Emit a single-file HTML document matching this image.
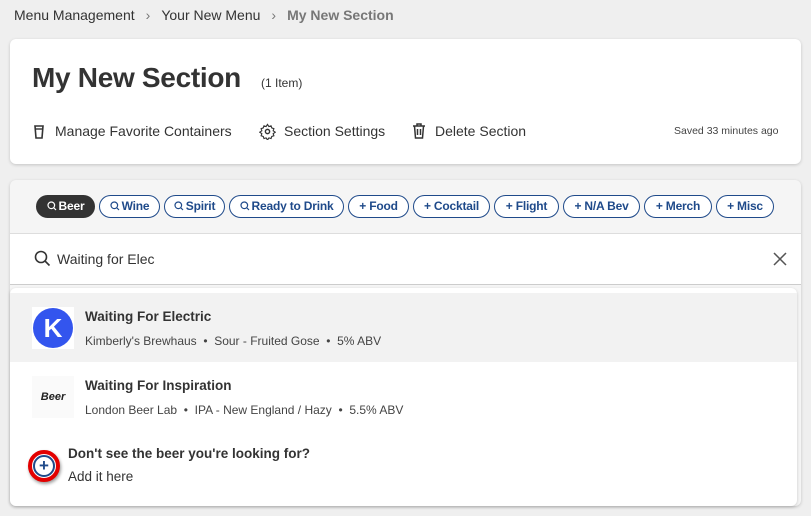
<!DOCTYPE html>
<html><head><style>
*{box-sizing:border-box;margin:0;padding:0}
body{width:811px;height:516px;background:#efefef;font-family:"Liberation Sans",sans-serif;color:#333;position:relative;overflow:hidden}
.abs{position:absolute}
.card{position:absolute;background:#fff;border-radius:6px;box-shadow:0 1px 3px rgba(0,0,0,.18)}
.bc{top:7px;left:14px;font-size:14px;color:#333;white-space:nowrap}
.bc span.sep{color:#777;margin:0 11px}
.pill{position:absolute;top:195px;height:23px;border:1.5px solid #1f4a8a;border-radius:12px;color:#1f4a8a;font-size:12px;font-weight:bold;line-height:20px;text-align:center;white-space:nowrap;background:#fff;letter-spacing:-0.2px}
.pill.on{background:#333;border-color:#333;color:#fff}
.pill svg{vertical-align:-1px;margin-right:2px}
.act{position:absolute;top:123px;font-size:14px;color:#333;white-space:nowrap}
.sub{font-size:12px;color:#444;white-space:nowrap}
</style></head><body>
<div class="abs bc">Menu Management<span class="sep">›</span>Your New Menu<span class="sep">›</span><b style="color:#777">My New Section</b></div>

<div class="card" style="left:10px;top:39px;width:791px;height:125px"></div>
<div class="abs" style="left:32px;top:62px;font-size:28px;font-weight:bold;color:#333;letter-spacing:-0.3px">My New Section</div>
<div class="abs" style="left:261px;top:76px;font-size:12px;color:#333">(1 Item)</div>
<svg class="abs" style="left:33px;top:124px" width="12" height="15" viewBox="0 0 12 15"><path d="M2 2h8l-1 12H3z" fill="none" stroke="#333" stroke-width="1.6"/><path d="M2 5h8" stroke="#333" stroke-width="1.4"/></svg>
<div class="act" style="left:55px">Manage Favorite Containers</div>
<svg class="abs" style="left:259px;top:123px" width="17" height="17" viewBox="0 0 24 24"><circle cx="12" cy="12" r="3" fill="none" stroke="#333" stroke-width="2"/><path d="M12 2l2 3 3-1 1 3 3 1-1 3 3 2-3 2 1 3-3 1-1 3-3-1-2 3-2-3-3 1-1-3-3-1 1-3-3-2 3-2-1-3 3-1 1-3 3 1z" fill="none" stroke="#333" stroke-width="1.6"/></svg>
<div class="act" style="left:284px">Section Settings</div>
<svg class="abs" style="left:412px;top:123px" width="14" height="16" viewBox="0 0 14 16"><path d="M1 3h12M5 3V1h4v2M2.5 3l1 12h7l1-12M5.5 6v6M8.5 6v6" fill="none" stroke="#333" stroke-width="1.5"/></svg>
<div class="act" style="left:435px">Delete Section</div>
<div class="abs" style="left:674px;top:125px;font-size:10.5px;color:#444;top:125px">Saved 33 minutes ago</div>

<div class="card" style="left:10px;top:180px;width:791px;height:326px;background:#f5f5f5"></div>
<div class="pill on" style="left:36px;width:59px"><svg width="10" height="10" viewBox="0 0 10 10"><circle cx="4.3" cy="4.3" r="3.3" fill="none" stroke="#fff" stroke-width="1.2"/><path d="M6.7 6.7L9 9" stroke="#fff" stroke-width="1.2"/></svg>Beer</div>
<div class="pill" style="left:99px;width:61px"><svg width="10" height="10" viewBox="0 0 10 10"><circle cx="4.3" cy="4.3" r="3.3" fill="none" stroke="#1f4a8a" stroke-width="1.2"/><path d="M6.7 6.7L9 9" stroke="#1f4a8a" stroke-width="1.2"/></svg>Wine</div>
<div class="pill" style="left:164px;width:61px"><svg width="10" height="10" viewBox="0 0 10 10"><circle cx="4.3" cy="4.3" r="3.3" fill="none" stroke="#1f4a8a" stroke-width="1.2"/><path d="M6.7 6.7L9 9" stroke="#1f4a8a" stroke-width="1.2"/></svg>Spirit</div>
<div class="pill" style="left:229px;width:115px"><svg width="10" height="10" viewBox="0 0 10 10"><circle cx="4.3" cy="4.3" r="3.3" fill="none" stroke="#1f4a8a" stroke-width="1.2"/><path d="M6.7 6.7L9 9" stroke="#1f4a8a" stroke-width="1.2"/></svg>Ready to Drink</div>
<div class="pill" style="left:348px;width:61px">+ Food</div>
<div class="pill" style="left:413px;width:77px">+ Cocktail</div>
<div class="pill" style="left:494px;width:65px">+ Flight</div>
<div class="pill" style="left:563px;width:77px">+ N/A Bev</div>
<div class="pill" style="left:644px;width:68px">+ Merch</div>
<div class="pill" style="left:716px;width:58px">+ Misc</div>

<div class="abs" style="left:10px;top:233px;width:791px;height:52px;background:#fff;border-top:1px solid #ddd;border-bottom:1px solid #ccc"></div>
<svg class="abs" style="left:34px;top:250px" width="17" height="17" viewBox="0 0 17 17"><circle cx="7" cy="7" r="5.5" fill="none" stroke="#333" stroke-width="1.6"/><path d="M11 11l4.5 4.5" stroke="#333" stroke-width="1.6"/></svg>
<div class="abs" style="left:57px;top:251px;font-size:14px;color:#333">Waiting for Elec</div>
<svg class="abs" style="left:773px;top:252px" width="14" height="14" viewBox="0 0 14 14"><path d="M1 1l12 12M13 1L1 13" stroke="#555" stroke-width="1.5"/></svg>

<div class="card" style="left:10px;top:288px;width:787px;height:218px"></div>
<div class="abs" style="left:10px;top:293px;width:787px;height:69px;background:#f2f2f2"></div>
<div class="abs" style="left:32px;top:307px;width:42px;height:42px;background:#fff"><div style="margin:1px;width:40px;height:40px;border-radius:50%;background:#3355ee;color:#fff;font-weight:bold;font-size:26px;text-align:center;line-height:40px">K</div></div>
<div class="abs" style="left:85px;top:309px;font-size:13.5px;font-weight:bold">Waiting For Electric</div>
<div class="abs sub" style="left:85px;top:334px">Kimberly's Brewhaus &nbsp;•&nbsp; Sour - Fruited Gose &nbsp;•&nbsp; 5% ABV</div>
<div class="abs" style="left:32px;top:376px;width:42px;height:42px;background:#fafafa;font-size:11px;font-weight:bold;font-style:italic;text-align:center;line-height:42px;color:#222">Beer</div>
<div class="abs" style="left:85px;top:378px;font-size:13.5px;font-weight:bold">Waiting For Inspiration</div>
<div class="abs sub" style="left:85px;top:403px">London Beer Lab &nbsp;•&nbsp; IPA - New England / Hazy &nbsp;•&nbsp; 5.5% ABV</div>
<div class="abs" style="left:28px;top:450px;width:32px;height:32px;border-radius:50%;border:4px solid #e30000;background:#fff;box-shadow:1px 2px 3px rgba(0,0,0,.4)"><div style="margin:1px;width:22px;height:22px;border-radius:50%;border:2px solid #1f4a8a;color:#1f4a8a;font-weight:bold;font-size:17px;line-height:17px;text-align:center">+</div></div>
<div class="abs" style="left:68px;top:446px;font-size:13.5px;font-weight:bold">Don't see the beer you're looking for?</div>
<div class="abs" style="left:68px;top:469px;font-size:13.5px;color:#333">Add it here</div>
</body></html>
